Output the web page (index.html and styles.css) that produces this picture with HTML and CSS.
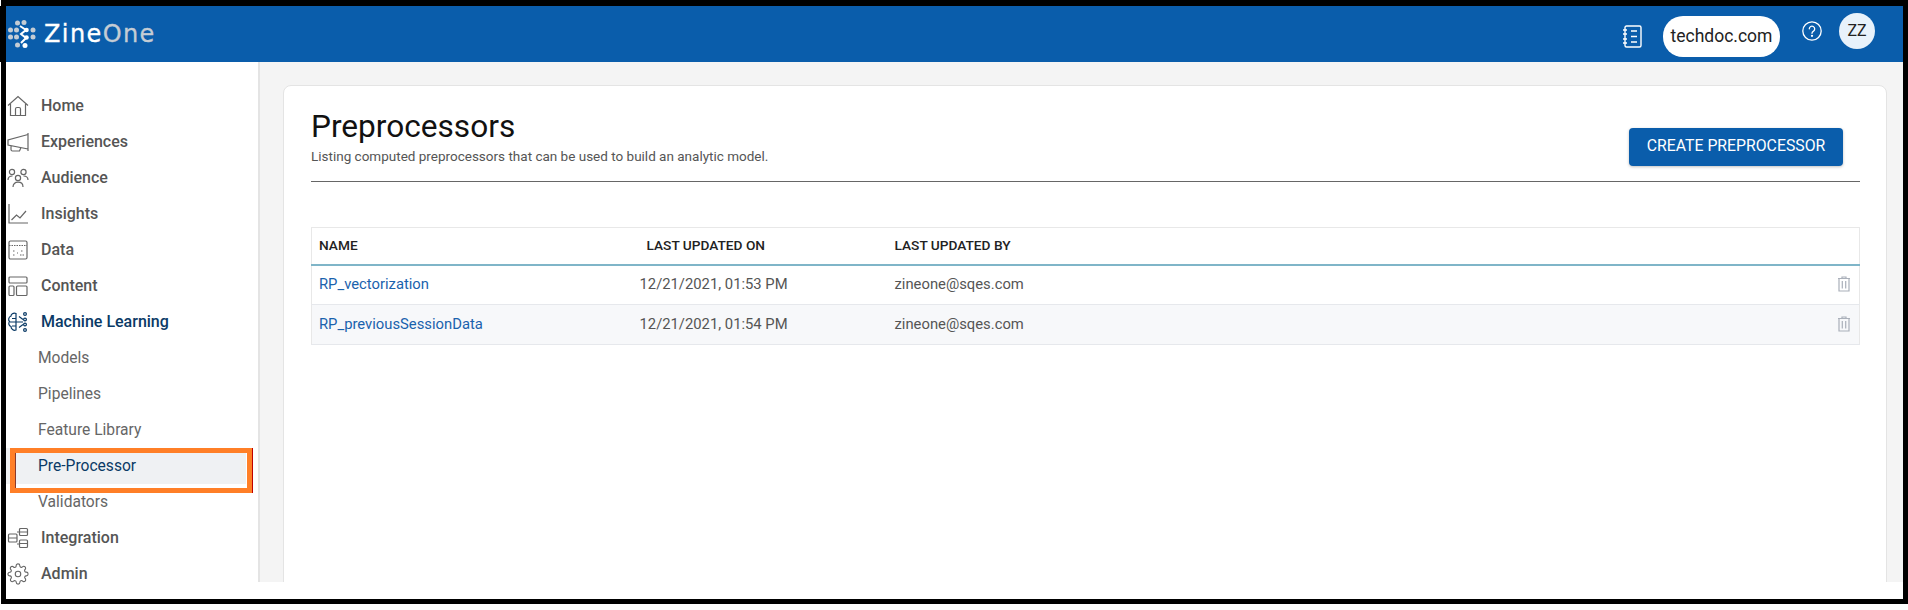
FILE: index.html
```html
<!DOCTYPE html>
<html lang="en">
<head>
  <meta charset="UTF-8">
  <title>Preprocessors</title>
  <link rel="stylesheet" href="styles.css">
</head>
<body>
  <div class="frame">
    <!-- Top bar -->
    <header class="topbar">
      <div class="logo">
        <svg class="logo-mark" width="28" height="28" viewBox="0 0 28 28">
          <g fill="#c4ccd4">
            <circle cx="2.500" cy="10" r="2.500"/><circle cx="2.500" cy="17" r="2.500"/>
            <circle cx="8.500" cy="10" r="2.500"/><circle cx="8.500" cy="17" r="2.500"/>
            <circle cx="9.500" cy="3" r="2.500"/><circle cx="9.500" cy="25" r="2.500"/>
            <circle cx="25" cy="10" r="2.500"/><circle cx="25" cy="17" r="2.500"/>
            <circle cx="16" cy="2.500" r="2.500"/>
          </g>
          <path d="M12 6 L18 10 L13 14 L18 18 L13 23" fill="none" stroke="#fff" stroke-width="2"/>
          <g fill="#fff">
            <circle cx="18.500" cy="10" r="2.300"/><circle cx="18.500" cy="17.500" r="2.300"/>
            <circle cx="17" cy="25.500" r="2.500"/>
          </g>
        </svg>
        <span class="logo-text">Zine<span class="logo-one">One</span></span>
      </div>
      <div class="topbar-right">
        <svg class="notebook" width="20" height="23" viewBox="0 0 20 23" fill="none" stroke="#fff" stroke-width="1.400">
          <rect x="3" y="1" width="16" height="21" rx="1.500"/>
          <path d="M1 5h4M1 9h4M1 14h4M1 18h4M9 6h6M9 11.500h6M9 17h6"/>
        </svg>
        <div class="domain">techdoc.com</div>
        <svg class="help" width="20" height="20" viewBox="0 0 20 20" fill="none" stroke="#fff" stroke-width="1.300">
          <circle cx="10" cy="10" r="9.200"/>
          <path d="M7.300 7.800a2.700 2.700 0 1 1 4.200 2.300c-1 .6-1.500 1.100-1.500 2.200" stroke-linecap="round"/>
          <circle cx="10" cy="14.800" r=".5" fill="#fff"/>
        </svg>
        <div class="avatar">ZZ</div>
      </div>
    </header>

    <div class="layout">
      <!-- Side menu -->
      <nav class="sidebar">
        <a class="nav-item">
          <svg class="nav-icon" width="22" height="22" viewBox="0 0 22 22">
            <path d="M1 10.500 11 1.500l10 9M3.500 9v11.500h15V9M8.500 20.500v-6.500a1.500 1.500 0 0 1 1.500-1.500h2a1.500 1.500 0 0 1 1.500 1.500v6.500"/>
          </svg>
          Home
        </a>
        <a class="nav-item">
          <svg class="nav-icon" width="22" height="22" viewBox="0 0 22 22">
            <path d="M21 2v18M21 3.500 1 9v5l20 4M4 15v3.500a1.500 1.500 0 0 0 1.500 1.500h7l1.500-3.500"/>
          </svg>
          Experiences
        </a>
        <a class="nav-item">
          <svg class="nav-icon" width="22" height="22" viewBox="0 0 22 22">
            <circle cx="5" cy="5" r="2.600"/><circle cx="16.500" cy="5" r="2.600"/><circle cx="11" cy="11" r="2.600"/>
            <path d="M1 13c0-2.500 1.500-4 4.500-4M21 13c0-2.500-1.500-4-4.500-4M6 20c0-3 2-4.800 5-4.800s5 1.800 5 4.800"/>
          </svg>
          Audience
        </a>
        <a class="nav-item">
          <svg class="nav-icon" width="22" height="22" viewBox="0 0 22 22">
            <path d="M2 1v19h19M4.500 17l5-5 3.500 3 6-7"/>
          </svg>
          Insights
        </a>
        <a class="nav-item">
          <svg class="nav-icon" width="22" height="22" viewBox="0 0 22 22">
            <rect x="2" y="2" width="18" height="18" rx="1.500"/>
            <path d="M2 6.500h18M6 12h2M10 14h1M14 12h2M6 16h2M13 16h4" stroke-dasharray="1.500 1"/>
          </svg>
          Data
        </a>
        <a class="nav-item">
          <svg class="nav-icon" width="22" height="22" viewBox="0 0 22 22">
            <rect x="2" y="2" width="18" height="6" rx="1"/>
            <rect x="2" y="11" width="5" height="9.500" rx="1"/>
            <rect x="9.500" y="11" width="10.500" height="9.500" rx="1"/>
          </svg>
          Content
        </a>
        <a class="nav-item nav-open">
          <svg class="nav-icon" width="22" height="22" viewBox="0 0 22 22">
            <path d="M9 2.500C6 1.500 4 3.500 4 5 1.500 6 1 9 2.500 10.500 1 12.500 2 15 4 15.500c0 2.500 2.500 4.500 5 3.500zM5 7.500h4M3 11h6M5 15h4"/>
            <path d="M9 11h7M12 5.500l4 3M12 16.500l4-3"/>
            <circle cx="18" cy="3" r="1.400"/><circle cx="18" cy="8.500" r="1.400"/><circle cx="18" cy="13.500" r="1.400"/><circle cx="18" cy="19" r="1.400"/>
          </svg>
          Machine Learning
        </a>
        <a class="nav-sub">Models</a>
        <a class="nav-sub">Pipelines</a>
        <a class="nav-sub">Feature Library</a>
        <a class="nav-sub nav-active">Pre-Processor<span class="callout"></span></a>
        <a class="nav-sub">Validators</a>
        <a class="nav-item">
          <svg class="nav-icon" width="22" height="22" viewBox="0 0 22 22">
            <rect x="1.500" y="7" width="8.500" height="8" rx="1"/>
            <rect x="12.500" y="1.500" width="8" height="7" rx="1"/>
            <rect x="12.500" y="13" width="8" height="7.500" rx="1"/>
            <path d="M1.500 11h8.500M10 5h2.500M10 17h2.500M12.500 5h8M12.500 16.500h8"/>
          </svg>
          Integration
        </a>
        <a class="nav-item">
          <svg class="nav-icon" width="22" height="22" viewBox="0 0 24 24">
            <circle cx="12" cy="12" r="3"/>
            <path d="M19.400 15a1.650 1.650 0 0 0 .33 1.820l.06.06a2 2 0 0 1 0 2.830 2 2 0 0 1-2.830 0l-.06-.06a1.650 1.650 0 0 0-1.820-.33 1.650 1.650 0 0 0-1 1.510V21a2 2 0 0 1-2 2 2 2 0 0 1-2-2v-.09A1.650 1.650 0 0 0 9 19.400a1.650 1.650 0 0 0-1.820.33l-.06.06a2 2 0 0 1-2.830 0 2 2 0 0 1 0-2.830l.06-.06a1.650 1.650 0 0 0 .33-1.820 1.650 1.650 0 0 0-1.510-1H3a2 2 0 0 1-2-2 2 2 0 0 1 2-2h.09A1.650 1.650 0 0 0 4.600 9a1.650 1.650 0 0 0-.33-1.820l-.06-.06a2 2 0 0 1 0-2.830 2 2 0 0 1 2.830 0l.06.06a1.650 1.650 0 0 0 1.820.33H9a1.650 1.650 0 0 0 1-1.510V3a2 2 0 0 1 2-2 2 2 0 0 1 2 2v.09a1.650 1.650 0 0 0 1 1.510 1.650 1.650 0 0 0 1.820-.33l.06-.06a2 2 0 0 1 2.830 0 2 2 0 0 1 0 2.830l-.06.06a1.650 1.650 0 0 0-.33 1.820V9a1.650 1.650 0 0 0 1.510 1H21a2 2 0 0 1 2 2 2 2 0 0 1-2 2h-.09a1.650 1.650 0 0 0-1.510 1z"/>
          </svg>
          Admin
        </a>
      </nav>

      <!-- Page content -->
      <main class="main">
        <section class="card">
          <div class="page-head">
            <div>
              <h1>Preprocessors</h1>
              <p class="subtitle">Listing computed preprocessors that can be used to build an analytic model.</p>
            </div>
            <button class="create-btn">CREATE PREPROCESSOR</button>
          </div>

          <table class="list">
            <thead>
              <tr>
                <th class="col-name">NAME</th>
                <th class="col-date">LAST UPDATED ON</th>
                <th class="col-user">LAST UPDATED BY</th>
                <th class="col-action"></th>
              </tr>
            </thead>
            <tbody>
              <tr>
                <td class="col-name"><a class="link">RP_vectorization</a></td>
                <td class="col-date">12/21/2021, 01:53 PM</td>
                <td class="col-user">zineone@sqes.com</td>
                <td class="col-action">
                  <svg class="trash" width="14" height="16" viewBox="0 0 14 16">
                    <path d="M1 2.500h12M5 2.500V1h4v1.500M2 2.500V15h10V2.500M5.300 5v7.500M8.700 5v7.500"/>
                  </svg>
                </td>
              </tr>
              <tr>
                <td class="col-name"><a class="link">RP_previousSessionData</a></td>
                <td class="col-date">12/21/2021, 01:54 PM</td>
                <td class="col-user">zineone@sqes.com</td>
                <td class="col-action">
                  <svg class="trash" width="14" height="16" viewBox="0 0 14 16">
                    <path d="M1 2.500h12M5 2.500V1h4v1.500M2 2.500V15h10V2.500M5.300 5v7.500M8.700 5v7.500"/>
                  </svg>
                </td>
              </tr>
            </tbody>
          </table>
        </section>
      </main>
    </div>
  </div>
</body>
</html>
```

FILE: styles.css
```css
* {
  box-sizing: border-box;
}

body {
  margin: 0;
  background-color: #ffffff;
  color: #333;
  font-family: Roboto, "Liberation Sans", sans-serif;
}

.frame {
  height: 604px;
  margin-left: 1px;
  border: solid #000;
  border-width: 6px 5px 5px 5px;
}

/* Top bar */
.topbar {
  display: flex;
  justify-content: space-between;
  align-items: center;
  height: 56px;
  background-color: #0a5dab;
  box-shadow: -6px 0 0 #000;
}

.logo {
  display: flex;
  align-items: center;
  padding-left: 2px;
  gap: 8px;
}

.logo-text {
  font-family: "DejaVu Sans", sans-serif;
  font-size: 24px;
  letter-spacing: 1.400px;
  color: #fff;
  -webkit-text-stroke: 0.3px currentColor;
}

.logo-one {
  color: #c4ccd4;
}

.topbar-right {
  display: flex;
  align-items: flex-start;
  height: 56px;
  padding-right: 28px;
}

.notebook {
  margin-top: 19px;
  margin-right: 21px;
}

.domain {
  margin-top: 10px;
  width: 117px;
  height: 41px;
  border-radius: 20px;
  background-color: #fff;
  color: #222;
  font-size: 17.500px;
  line-height: 41px;
  text-align: center;
}

.help {
  margin-top: 15px;
  margin-left: 22px;
}

.avatar {
  margin-top: 7px;
  margin-left: 17px;
  width: 36px;
  height: 36px;
  border-radius: 50%;
  background-color: #e8f2fb;
  color: #222;
  font-size: 16px;
  line-height: 35px;
  text-align: center;
}

/* Side menu */
.layout {
  display: flex;
  height: 520px;
}

.sidebar {
  width: 254px;
  flex-shrink: 0;
  padding-top: 25.500px;
  background-color: #fff;
  border-right: 2px solid #e4e4e4;
}

.nav-item,
.nav-sub {
  display: flex;
  align-items: center;
  height: 36px;
  color: #555;
}

.nav-item {
  gap: 12px;
  padding-left: 1px;
  font-size: 16px;
  font-weight: 500;
}

.nav-open {
  color: #0a3a66;
}

.nav-sub {
  position: relative;
  padding-left: 32px;
  font-size: 15.600px;
  color: #666;
}

.nav-icon {
  flex-shrink: 0;
  fill: none;
  stroke: #666;
  stroke-width: 1.200;
}

.nav-open .nav-icon {
  stroke: #0a3a66;
}

.nav-active {
  margin-right: 12px;
  background-color: #eff1f3;
  color: #0a3a66;
}

/* Orange annotation drawn over the selected row */
.callout {
  position: absolute;
  top: 0;
  left: 4px;
  width: 242px;
  height: 45px;
  border: 5px solid #ff7f27;
  box-shadow: 1px 0 0 #c00000, inset 1px 0 0 #8a3a2a;
}

/* Page content */
.main {
  flex: 1;
  min-width: 0;
  padding: 23px 16px 0 23px;
  background-color: #f4f4f4;
  overflow: hidden;
}

.card {
  height: 520px;
  padding: 0 26px 0 27px;
  background-color: #fff;
  border: 1px solid #e4e4e4;
  border-radius: 8px;
}

.page-head {
  display: flex;
  justify-content: space-between;
  align-items: flex-start;
  height: 96px;
  padding-top: 22px;
  border-bottom: 1px solid #666;
}

h1 {
  margin: 0;
  font-size: 31.600px;
  font-weight: 400;
  line-height: 38px;
  color: #111;
}

.subtitle {
  margin: 2px 0 0 0;
  font-size: 13.500px;
  line-height: 16px;
  color: #555;
}

.create-btn {
  margin: 20px 17px 0 0;
  width: 214px;
  height: 38px;
  padding: 0 0 3px 0;
  border: none;
  border-radius: 4px;
  background-color: #0a5dab;
  color: #fff;
  font-family: inherit;
  font-size: 15.800px;
  box-shadow: 0 1px 3px rgba(0, 0, 0, 0.25);
}

.list {
  width: 100%;
  margin-top: 45px;
  border-collapse: collapse;
  table-layout: fixed;
  border: 1px solid #e8e8e8;
  font-size: 14.800px;
}

.list th {
  height: 37px;
  padding-bottom: 3px;
  font-size: 13.700px;
  font-weight: 500;
  color: #222;
  text-align: left;
  border-bottom: 2px solid #7fb5c8;
}

.list td {
  height: 40px;
  padding-bottom: 2px;
  color: #555;
  border-bottom: 1px solid #e6e8ec;
}

.list tbody tr:nth-child(2) td {
  background-color: #f7f8fa;
}

.list .col-name {
  width: 287px;
  padding-left: 7px;
}

.list .col-date {
  width: 200px;
  padding-left: 41px;
}

.list th.col-date {
  padding-left: 48px;
}

.list .col-user {
  padding-left: 96px;
}

.list .col-action {
  width: 30px;
  text-align: center;
}

.link {
  color: #1a62ad;
}

.trash {
  display: block;
  margin: 0 auto;
  fill: none;
  stroke: #aab0ba;
  stroke-width: 1.200;
}
```
